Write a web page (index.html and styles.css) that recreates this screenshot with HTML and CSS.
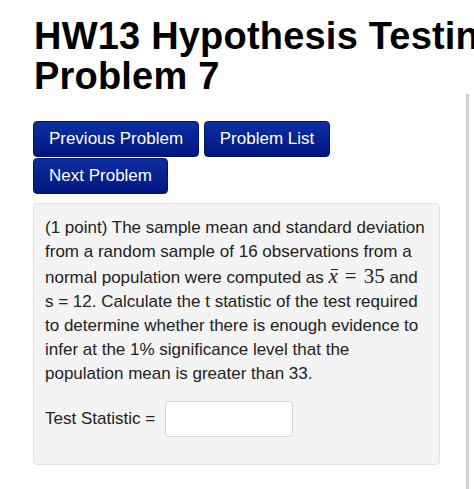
FILE: index.html
```html
<!DOCTYPE html>
<html lang="en">
<head>
  <meta charset="UTF-8" />
  <meta name="viewport" content="width=device-width, initial-scale=1.0" />
  <title>HW13 Hypothesis Testing: Problem 7</title>
  <link rel="stylesheet" href="styles.css">
</head>
<body>
  <h1 class="page-title">HW13 Hypothesis Testing<br>Problem 7</h1>
  <div class="page-body">
    <main class="content">
      <div class="nav-buttons">
        <button class="nav-button">Previous Problem</button>
        <button class="nav-button">Problem List</button>
        <button class="nav-button">Next Problem</button>
      </div>
      <div class="problem">
        <p>(1 point) The sample mean and standard deviation from a random sample of 16 observations from a normal population were computed as <span class="math"><span class="xbar">x</span><span class="op">=</span>35</span> and s&nbsp;=&nbsp;12. Calculate the t statistic of the test required to determine whether there is enough evidence to infer at the 1% significance level that the population mean is greater than 33.</p>
        <div class="answer-row">
          <label for="answer">Test Statistic =</label>
          <input id="answer" class="answer-input" type="text">
        </div>
      </div>
    </main>
    <div class="gutter"></div>
  </div>
</body>
</html>
```

FILE: styles.css
```css
body { margin: 0; background: #fff; color: #222; font-family: "Liberation Sans", Arial, sans-serif; overflow: hidden; width: 474px; height: 489px; }
.page-title { margin: 0; padding: 16px 0 0 34px; font-size: 38px; line-height: 40px; font-weight: bold; color: #000; white-space: nowrap; letter-spacing: 0.2px; overflow: hidden; }
.page-body { display: flex; }
.content { width: 408px; padding: 25px 0 0 33px; }
.gutter { margin: -2px 0 0 25px; width: 3px; height: 398px; background: #cfcfcf; }
.nav-buttons { display: flex; flex-wrap: wrap; gap: 1px 5px; width: 300px; }
.nav-button { height: 36px; padding: 0; border: 1px solid #001366; border-radius: 4px; background: linear-gradient(#0d2fa3, #001680); color: #fff; font-family: "Liberation Sans", Arial, sans-serif; font-size: 17px; }
.nav-button:first-child { width: 166px; }
.nav-button:nth-child(2) { width: 126px; }
.nav-button:nth-child(3) { width: 135px; }
.problem { margin-top: 9px; width: 407px; height: 262px; box-sizing: border-box; padding: 12px 8px 0 11px; background: #f4f4f4; border: 1px solid #e2e2e2; border-radius: 4px; }
.problem p { margin: 0; font-size: 17px; line-height: 24px; }
.math { font-family: "Liberation Serif", "Times New Roman", serif; font-size: 21px; }
.xbar { position: relative; font-style: italic; }
.xbar::before { content: ""; position: absolute; left: 2px; right: 0; top: 5px; height: 1px; background: #222; }
.op { display: inline-block; margin: 0 7px; }
.answer-row { display: flex; align-items: center; gap: 10px; margin-top: 15px; font-size: 17px; }
.answer-input { width: 128px; height: 36px; box-sizing: border-box; border: 1px solid #d4d4d4; border-radius: 4px; background: #fff; }
```
